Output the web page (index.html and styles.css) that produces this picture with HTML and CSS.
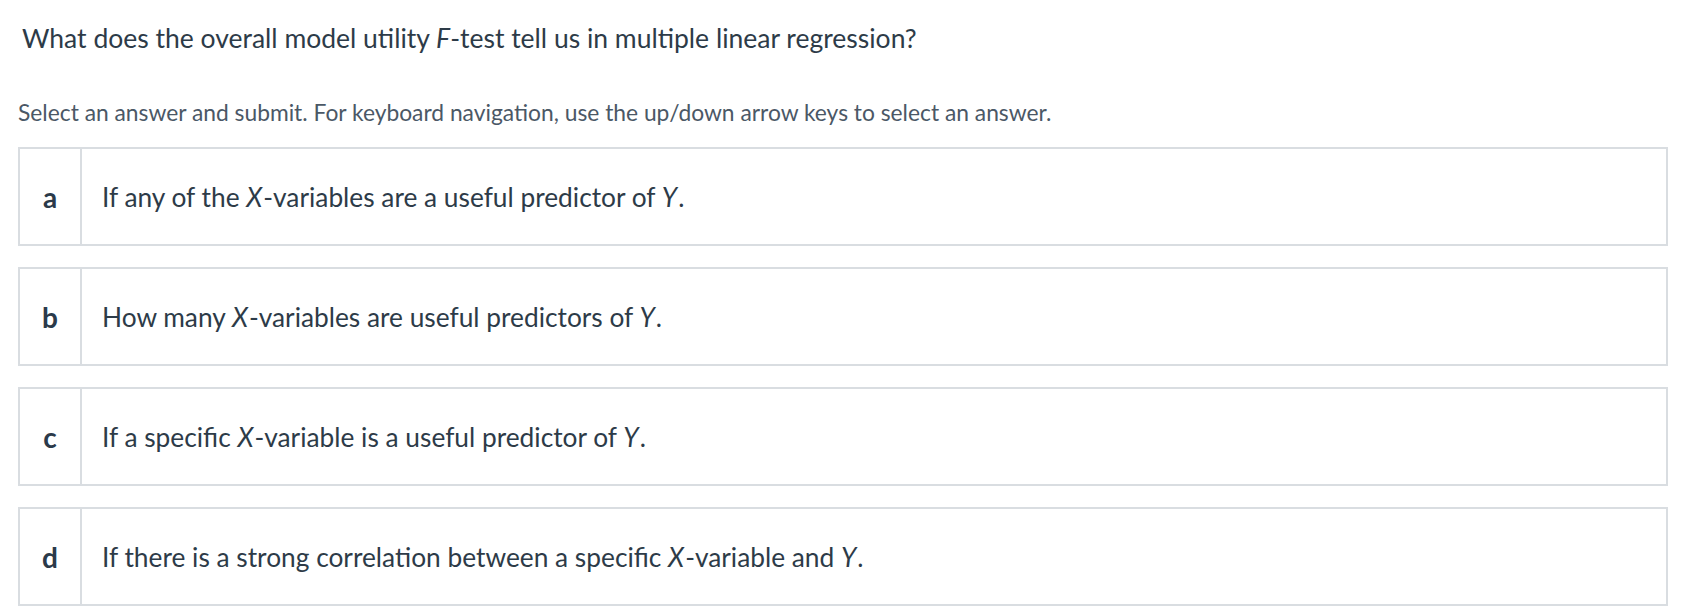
FILE: index.html
```html
<!DOCTYPE html>
<html lang="en">
<head>
<meta charset="utf-8">
<title>Question</title>
<link rel="stylesheet" href="styles.css">
</head>
<body>
<main class="question">
  <h1 class="prompt">What does the overall model utility <i>F</i>-test tell us in multiple linear regression?</h1>
  <p class="instructions">Select an answer and submit. For keyboard navigation, use the up/down arrow keys to select an answer.</p>
  <ul class="choices">
    <li class="choice"><span class="letter">a</span><span class="text">If any of the <i>X</i>-variables are a useful predictor of <i>Y</i>.</span></li>
    <li class="choice"><span class="letter">b</span><span class="text">How many <i>X</i>-variables are useful predictors of <i>Y</i>.</span></li>
    <li class="choice"><span class="letter">c</span><span class="text">If a specific <i>X</i>-variable is a useful predictor of <i>Y</i>.</span></li>
    <li class="choice"><span class="letter">d</span><span class="text">If there is a strong correlation between a specific <i>X</i>-variable and <i>Y</i>.</span></li>
  </ul>
</main>
</body>
</html>
```
FILE: styles.css
```css
html, body {
  margin: 0;
  padding: 0;
  background: #ffffff;
}
body {
  font-family: "Lato", "Open Sans", sans-serif;
  color: #2d3b48;
}
.question {
  padding: 21px 28px 0 18px;
}
.prompt {
  margin: 0;
  padding-left: 4px;
  font-size: 26.5px;
  line-height: 34px;
  font-weight: 400;
  color: #2d3b48;
}
.instructions {
  margin: 42px 0 20px 0;
  font-size: 22.8px;
  line-height: 30px;
  color: #4b5866;
}
.choices {
  list-style: none;
  margin: 0;
  padding: 0;
  display: flex;
  flex-direction: column;
  gap: 21px;
}
.choice {
  display: flex;
  height: 95px;
  border: 2px solid #d9dde1;
}
.letter {
  flex: 0 0 60px;
  display: flex;
  align-items: center;
  justify-content: center;
  border-right: 2px solid #d9dde1;
  font-size: 28px;
  line-height: 34px;
  font-weight: 700;
  color: #2b3a4a;
}
.text {
  display: flex;
  align-items: center;
  padding-left: 20px;
  font-size: 26.3px;
  line-height: 34px;
  color: #2d3b48;
  white-space: pre;
}
.text i {
  padding-right: 1px;
}
```
